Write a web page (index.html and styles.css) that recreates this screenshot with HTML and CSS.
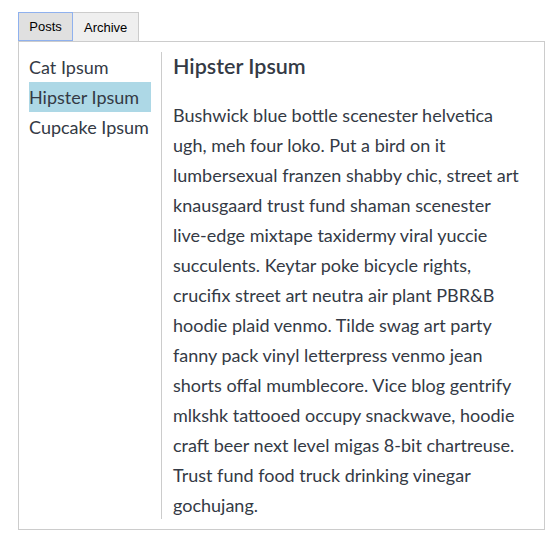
FILE: index.html
```html
<!DOCTYPE html>
<html>
<head>
<meta charset="utf-8">
<link rel="stylesheet" href="styles.css">
</head>
<body>
<div class="app">
  <div class="tabs">
    <button class="tab active">Posts</button>
    <button class="tab">Archive</button>
  </div>
  <div class="panel">
    <ul class="list">
      <li>Cat Ipsum</li>
      <li class="selected">Hipster Ipsum</li>
      <li>Cupcake Ipsum</li>
    </ul>
    <div class="detail">
      <h2>Hipster Ipsum</h2>
      <p>Bushwick blue bottle scenester helvetica ugh, meh four loko. Put a bird on it lumbersexual franzen shabby chic, street art knausgaard trust fund shaman scenester live-edge mixtape taxidermy viral yuccie succulents. Keytar poke bicycle rights, crucifix street art neutra air plant PBR&amp;B hoodie plaid venmo. Tilde swag art party fanny pack vinyl letterpress venmo jean shorts offal mumblecore. Vice blog gentrify mlkshk tattooed occupy snackwave, hoodie craft beer next level migas 8-bit chartreuse. Trust fund food truck drinking vinegar gochujang.</p>
    </div>
  </div>
</div>
</body>
</html>
```
FILE: styles.css
```css
* { box-sizing: border-box; }
html, body { margin: 0; padding: 0; background: #fff; }
.app {
  padding: 12px 14px 0 18px;
}
.tabs {
  display: flex;
  height: 29px;
}
.tab {
  font-family: "Liberation Sans", Arial, sans-serif;
  font-size: 13px;
  color: #000;
  background: #efefef;
  border: 1px solid #ccc;
  border-bottom: none;
  border-left: none;
  padding: 0 11px 0 11px;
  height: 29px;
  margin: 0;
  cursor: pointer;
}
.tab.active {
  background: #e0e0e0;
  border: 1px solid #8fb1ee;
  width: 55px;
  padding: 0;
}
.panel {
  display: flex;
  align-items: flex-start;
  border: 1px solid #ccc;
  padding: 10px;
  font-family: Lato, "Open Sans", sans-serif;
  font-size: 18px;
  color: #343a45;
  height: 489px;
}
.list {
  list-style: none;
  margin: 0;
  padding: 0;
  flex: none;
  min-width: 122px;
}
.list li {
  line-height: 30px;
  height: 30px;
  white-space: nowrap;
}
.list li.selected {
  background: #add8e6;
}
.detail {
  margin-left: 10px;
  border-left: 1px solid #ccc;
  padding-left: 11px;
  padding-right: 9px;
  flex: 1;
  align-self: stretch;
}
.detail h2 {
  margin: 0 0 20px;
  font-size: 21.5px;
  font-weight: 600;
  line-height: 28px;
}
.detail p {
  margin: 0;
  line-height: 30px;
}
```
